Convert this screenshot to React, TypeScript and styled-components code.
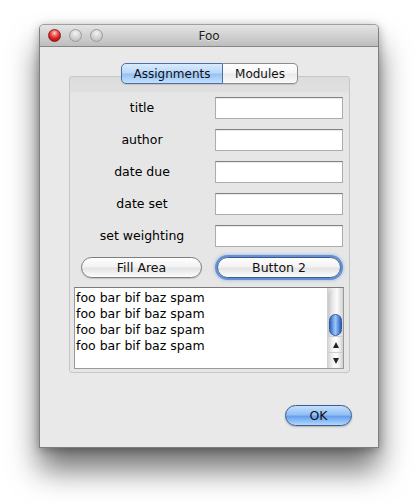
import styled, { createGlobalStyle } from "styled-components";

const GlobalStyle = createGlobalStyle`
  html, body, #root {
    margin: 0;
    padding: 0;
    height: 100%;
    background: #ffffff;
  }
  body {
    font-family: "DejaVu Sans", "Liberation Sans", sans-serif;
    color: #000;
  }
`;

const fields = ["title", "author", "date due", "date set", "set weighting"];
const lines = [
  "foo bar bif baz spam",
  "foo bar bif baz spam",
  "foo bar bif baz spam",
  "foo bar bif baz spam",
];

const App = () => {
  return (
    <StyledPage>
      <GlobalStyle />
      <StyledWindow>
        <StyledTitleBar>
          <StyledLights>
            <StyledLight $kind="close" />
            <StyledLight $kind="idle" />
            <StyledLight $kind="idle" />
          </StyledLights>
          <StyledTitle>Foo</StyledTitle>
          <span />
        </StyledTitleBar>
        <StyledBody>
          <StyledTabStrip>
            <StyledTab $selected $side="left">
              Assignments
            </StyledTab>
            <StyledTab $side="right">Modules</StyledTab>
          </StyledTabStrip>
          <StyledTabBox>
            <StyledForm>
              {fields.map((f) => (
                <StyledRow key={f}>
                  <StyledLabel>{f}</StyledLabel>
                  <StyledField />
                </StyledRow>
              ))}
            </StyledForm>
            <StyledButtonRow>
              <StyledButton $width={121}>Fill Area</StyledButton>
              <StyledButton $width={124} $focused>
                Button 2
              </StyledButton>
            </StyledButtonRow>
            <StyledList>
              <StyledListText>
                {lines.map((l, i) => (
                  <div key={i}>{l}</div>
                ))}
              </StyledListText>
              <StyledScrollBar>
                <StyledTrack>
                  <StyledThumb />
                </StyledTrack>
                <StyledArrow $dir="up" />
                <StyledArrow $dir="down" />
              </StyledScrollBar>
            </StyledList>
          </StyledTabBox>
          <StyledFooter>
            <StyledOkButton>OK</StyledOkButton>
          </StyledFooter>
        </StyledBody>
      </StyledWindow>
    </StyledPage>
  );
};

export default App;

const StyledPage = styled.div`
  box-sizing: border-box;
  min-height: 100%;
  padding: 24px 0 0 39px;
  background: #ffffff;
`;

const StyledWindow = styled.div`
  box-sizing: border-box;
  width: 340px;
  height: 424px;
  display: flex;
  flex-direction: column;
  background: #e9e9e9;
  border: 1px solid #7f7f7f;
  border-top-color: #a0a0a0;
  border-radius: 5px 5px 0 0;
  box-shadow: 0 22px 30px rgba(0, 0, 0, 0.55), 0 2px 10px rgba(0, 0, 0, 0.3);
`;

const StyledTitleBar = styled.div`
  height: 21px;
  flex: none;
  display: grid;
  grid-template-columns: 1fr auto 1fr;
  align-items: center;
  background: linear-gradient(#e4e4e4, #cdcdcd 60%, #bdbdbd);
  border-bottom: 1px solid #868686;
  border-radius: 4px 4px 0 0;
`;

const StyledLights = styled.div`
  display: flex;
  gap: 8px;
  padding-left: 8px;
`;

const StyledLight = styled.div<{ $kind: "close" | "idle" }>`
  width: 13px;
  height: 13px;
  box-sizing: border-box;
  border-radius: 50%;
  border: 1px solid ${({ $kind }) => ($kind === "close" ? "#8e1d1d" : "#9c9c9c")};
  background: ${({ $kind }) =>
    $kind === "close"
      ? "radial-gradient(circle at 50% 28%, #ffd4d4 0, #f2605a 30%, #d11f1f 60%, #9a0b0b 100%)"
      : "radial-gradient(circle at 50% 30%, #f4f4f4 0, #d6d6d6 45%, #b6b6b6 100%)"};
`;

const StyledTitle = styled.div`
  font-size: 12px;
  color: #1a1a1a;
  text-shadow: 0 1px 0 rgba(255, 255, 255, 0.5);
`;

const StyledBody = styled.div`
  flex: 1;
  display: flex;
  flex-direction: column;
  padding: 16px 28px 0 29px;
`;

const StyledTabStrip = styled.div`
  position: relative;
  z-index: 1;
  display: flex;
  justify-content: center;
  margin-bottom: -8px;
`;

const StyledTab = styled.div<{ $selected?: boolean; $side: "left" | "right" }>`
  box-sizing: border-box;
  width: ${({ $side }) => ($side === "left" ? "102px" : "75px")};
  height: 21px;
  display: flex;
  align-items: center;
  justify-content: center;
  font-size: 12px;
  color: #111;
  border: 1px solid ${({ $selected }) => ($selected ? "#4d6fa6" : "#8c8c8c")};
  border-left-width: ${({ $side }) => ($side === "left" ? "1px" : "0")};
  border-radius: ${({ $side }) => ($side === "left" ? "5px 0 0 5px" : "0 5px 5px 0")};
  background: ${({ $selected }) =>
    $selected
      ? "linear-gradient(#d9ebfe, #b8d7fa 48%, #94c2f5 52%, #c4e0fc)"
      : "linear-gradient(#ffffff, #f6f6f6 48%, #eaeaea 52%, #fafafa)"};
  box-shadow: 0 1px 1px rgba(0, 0, 0, 0.12);
`;

const StyledTabBox = styled.div`
  box-sizing: border-box;
  height: 297px;
  display: flex;
  flex-direction: column;
  border: 1px solid #c6c6c6;
  border-radius: 3px;
  background: linear-gradient(#dcdcdc, #e0e0e0 15px, #e6e6e6 16px, #e6e6e6);
`;

const StyledForm = styled.div`
  display: flex;
  flex-direction: column;
  gap: 10px;
  padding: 20px 6px 0 4px;
`;

const StyledRow = styled.div`
  display: grid;
  grid-template-columns: 1fr 128px;
  column-gap: 5px;
  align-items: center;
`;

const StyledLabel = styled.div`
  text-align: center;
  font-size: 12.5px;
  line-height: 22px;
`;

const StyledField = styled.input`
  box-sizing: border-box;
  width: 128px;
  height: 22px;
  margin: 0;
  padding: 0 3px;
  border: 1px solid #acacac;
  border-top-color: #808080;
  background: #fff;
  box-shadow: inset 0 1px 1px rgba(0, 0, 0, 0.08);
  font: inherit;
  outline: none;
`;

const StyledButtonRow = styled.div`
  display: grid;
  grid-template-columns: 121px 124px;
  column-gap: 15px;
  padding: 10px 0 0 11px;
`;

const StyledButton = styled.div<{ $width: number; $focused?: boolean }>`
  box-sizing: border-box;
  width: ${({ $width }) => $width}px;
  height: 21px;
  display: flex;
  align-items: center;
  justify-content: center;
  font-size: 12.5px;
  color: #111;
  border-radius: 11px;
  border: 1px solid ${({ $focused }) => ($focused ? "#3a5a8e" : "#7d7d7d")};
  background: linear-gradient(#ffffff, #f3f3f3 45%, #e4e4e4 55%, #fdfdfd);
  box-shadow: ${({ $focused }) =>
    $focused
      ? "0 0 0 2px rgba(90, 138, 210, 0.9), 0 0 3px 3px rgba(120, 165, 225, 0.45)"
      : "0 1px 1px rgba(0, 0, 0, 0.15)"};
`;

const StyledList = styled.div`
  box-sizing: border-box;
  height: 82px;
  margin: 9px 5px 0 4px;
  display: flex;
  background: #fff;
  border: 1px solid #9a9a9a;
  border-top-color: #7a7a7a;
`;

const StyledListText = styled.div`
  flex: 1;
  padding: 2px 0 0 1px;
  font-size: 12.5px;
  line-height: 16px;
  color: #000;
`;

const StyledScrollBar = styled.div`
  width: 15px;
  display: flex;
  flex-direction: column;
  border-left: 1px solid #d0d0d0;
  background: linear-gradient(to right, #d6d6d6, #f6f6f6 35%, #ffffff 55%, #e9e9e9 80%, #cfcfcf);
`;

const StyledTrack = styled.div`
  flex: 1;
  display: flex;
  flex-direction: column;
  justify-content: flex-end;
  padding: 2px 1px 0 1px;
  border-radius: 7px 7px 0 0;
  background: linear-gradient(to right, #c8c8c8, #ececec 35%, #fbfbfb 60%, #d2d2d2);
`;

const StyledThumb = styled.div`
  height: 22px;
  border-radius: 7px;
  border: 1px solid #2d5aa2;
  box-sizing: border-box;
  background: linear-gradient(to right, #2f66c0, #7eaef0 35%, #9cc3f5 50%, #5d92e2 75%, #2a5db5);
`;

const StyledArrow = styled.div<{ $dir: "up" | "down" }>`
  height: 15px;
  display: flex;
  align-items: center;
  justify-content: center;
  border-top: 1px solid #cfcfcf;

  &::after {
    content: "";
    width: 0;
    height: 0;
    border-left: 3.5px solid transparent;
    border-right: 3.5px solid transparent;
    ${({ $dir }) =>
      $dir === "up"
        ? "border-bottom: 6px solid #222;"
        : "border-top: 6px solid #222;"}
  }
`;

const StyledFooter = styled.div`
  display: flex;
  justify-content: flex-end;
  padding-top: 32px;
  margin-right: -2px;
`;

const StyledOkButton = styled.div`
  box-sizing: border-box;
  width: 67px;
  height: 21px;
  display: flex;
  align-items: center;
  justify-content: center;
  font-size: 12.5px;
  color: #111;
  border-radius: 11px;
  border: 1px solid #3b5c91;
  background: linear-gradient(#c4defc, #93c0f5 45%, #64a0ee 55%, #b2d7fc);
  box-shadow: 0 1px 2px rgba(0, 0, 0, 0.25);
`;
